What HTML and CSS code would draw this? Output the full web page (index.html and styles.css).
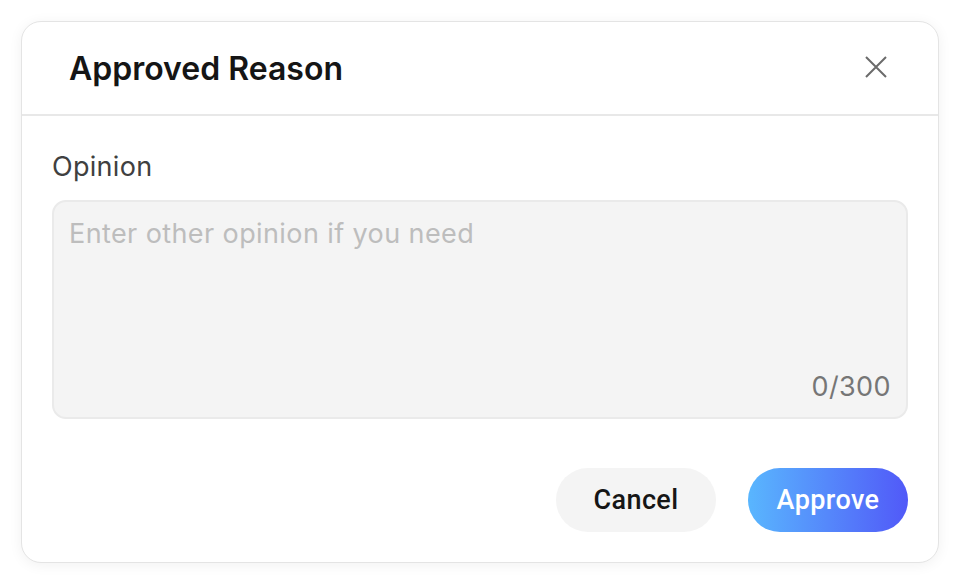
FILE: index.html
```html
<!DOCTYPE html>
<html>
<head>
<meta charset="utf-8">
<link rel="stylesheet" href="styles.css">
</head>
<body>
<div class="dialog">
  <div class="header">
    <h1 class="title">Approved Reason</h1>
    <button class="close" aria-label="Close">
      <svg width="22" height="22" viewBox="0 0 22 22"><path d="M1 1L21 21M21 1L1 21" stroke="#6b6b6b" stroke-width="2" fill="none"/></svg>
    </button>
  </div>
  <div class="body">
    <label class="label">Opinion</label>
    <div class="field">
      <textarea class="input" placeholder="Enter other opinion if you need"></textarea>
      <div class="count">0/300</div>
    </div>
  </div>
  <div class="footer">
    <button class="btn btn-cancel">Cancel</button>
    <button class="btn btn-approve">Approve</button>
  </div>
</div>
</body>
</html>
```
FILE: styles.css
```css
* { box-sizing: border-box; }
html, body { margin: 0; padding: 0; background: #ffffff; }
body {
  padding: 21px;
  font-family: Inter, "Noto Sans", sans-serif;
}
.dialog {
  width: 918px;
  height: 542px;
  background: #fff;
  border: 1px solid #e4e4e4;
  border-radius: 20px;
  box-shadow: 0 2px 14px rgba(0,0,0,0.06);
  display: flex;
  flex-direction: column;
}
.header {
  height: 94px;
  border-bottom: 2px solid #e8e8e8;
  display: flex;
  align-items: center;
  justify-content: space-between;
  padding: 0 51px 0 47px;
}
.title {
  margin: 0;
  font-size: 32px;
  font-weight: 600;
  color: #151515;
  line-height: 40px;
  padding-top: 2px;
}
.close {
  border: 0;
  background: none;
  padding: 0;
  width: 22px;
  height: 22px;
  display: flex;
  margin-bottom: 2px;
}
.body {
  padding: 36px 30px 0 30px;
  display: flex;
  flex-direction: column;
}
.label {
  font-size: 27px;
  letter-spacing: 0.3px;
  color: #404040;
  line-height: 30px;
  margin-bottom: 18px;
}
.field {
  height: 219px;
  background: #f4f4f4;
  border: 2px solid #eaeaea;
  border-radius: 14px;
  display: flex;
  flex-direction: column;
  padding: 15px 15px 15px 15px;
}
.input {
  flex: 1;
  border: 0;
  background: transparent;
  resize: none;
  outline: none;
  font-family: Inter, "Noto Sans", sans-serif;
  font-size: 27px;
  letter-spacing: 0.4px;
  line-height: 34px;
  padding: 0;
  color: #222;
}
.input::placeholder { color: #bdbdbd; }
.count {
  align-self: flex-end;
  font-size: 27px;
  letter-spacing: 0.4px;
  color: #767676;
  line-height: 30px;
}
.footer {
  display: flex;
  justify-content: flex-end;
  gap: 32px;
  padding: 49px 30px 0 30px;
}
.btn {
  width: 160px;
  height: 64px;
  border-radius: 32px;
  border: 0;
  font-family: Roboto, Inter, sans-serif;
  font-size: 27px;
  letter-spacing: 0.4px;
  font-weight: 500;
}
.btn-cancel { background: #f4f4f4; color: #161616; }
.btn-approve {
  background: linear-gradient(90deg, #59b6fe 0%, #5159f8 100%);
  color: #fff;
}
```
